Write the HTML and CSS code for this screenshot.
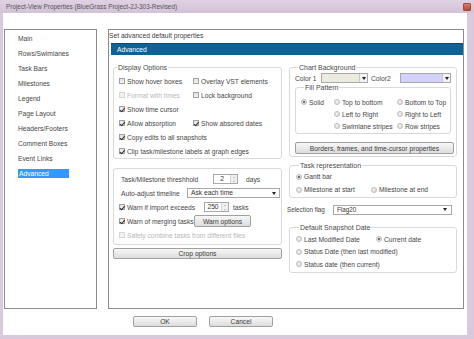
FILE: index.html
```html
<!DOCTYPE html>
<html lang="en">
<head>
  <meta charset="UTF-8" />
  <title>Project-View Properties</title>
  <link rel="stylesheet" href="styles.css">
</head>
<body>

  <div class="window">
    <div class="titlebar">
      <span class="title">Project-View Properties (BlueGrass Project-2J-303-Revised)</span>
      <span class="close"></span>
    </div>

    <div class="client">
      <div class="body">
        <ul class="nav">
          <li>Main</li>
          <li>Rows/Swimlanes</li>
          <li>Task Bars</li>
          <li>Milestones</li>
          <li>Legend</li>
          <li>Page Layout</li>
          <li>Headers/Footers</li>
          <li>Comment Boxes</li>
          <li>Event Links</li>
          <li><span class="selected">Advanced</span></li>
        </ul>

        <div class="panel">
          <div class="panel-caption">Set advanced default properties</div>
          <div class="panel-header">Advanced</div>

          <div class="columns">
            <div class="col col-left">
              <fieldset class="group display-group">
                <legend>Display Options</legend>
                <div class="check-grid">
                  <label class="opt"><span class="cb"></span>Show hover boxes</label>
                  <label class="opt"><span class="cb"></span>Overlay VST elements</label>
                  <label class="opt disabled"><span class="cb"></span>Format with times</label>
                  <label class="opt"><span class="cb"></span>Lock background</label>
                  <label class="opt wide"><span class="cb on"></span>Show time cursor</label>
                  <label class="opt"><span class="cb on"></span>Allow absorption</label>
                  <label class="opt"><span class="cb on"></span>Show absored dates</label>
                  <label class="opt wide"><span class="cb on"></span>Copy edits to all snapshots</label>
                  <label class="opt wide"><span class="cb on"></span>Clip task/milestone labels at graph edges</label>
                </div>
              </fieldset>

              <fieldset class="group threshold-group">
                <div class="row">
                  <span class="row-label threshold-label">Task/Milestone threshhold</span>
                  <span class="spin spin-days"><span class="spin-value">2</span><span class="spin-arrows"><i></i><i></i></span></span>
                  <span class="unit">days</span>
                </div>
                <div class="row">
                  <span class="row-label adjust-label">Auto-adjust timeline</span>
                  <span class="select adjust-select"><span class="select-text">Ask each time</span><span class="arrow"></span></span>
                </div>
                <div class="row row-check">
                  <label class="opt import-opt"><span class="cb on"></span>Warn if import exceeds</label>
                  <span class="spin spin-tasks"><span class="spin-value">250</span><span class="spin-arrows"><i></i><i></i></span></span>
                  <span class="unit unit-tasks">tasks</span>
                </div>
                <div class="row row-check">
                  <label class="opt merge-opt"><span class="cb on"></span>Warn of merging tasks</label>
                  <button class="btn warn-btn" type="button">Warn options</button>
                </div>
                <div class="row row-check">
                  <label class="opt disabled"><span class="cb"></span>Safely combine tasks from different files</label>
                </div>
              </fieldset>

              <button class="btn crop-btn" type="button">Crop options</button>
            </div>

            <div class="col col-right">
              <fieldset class="group chart-group">
                <legend>Chart Background</legend>
                <div class="color-row">
                  <span class="color-label">Color 1</span>
                  <span class="select color-select color-one"><span class="select-text"></span><span class="arrow"></span></span>
                  <span class="color-label color-label-two">Color2</span>
                  <span class="select color-select color-two"><span class="select-text"></span><span class="arrow"></span></span>
                </div>

                <fieldset class="group fill-group">
                  <legend>Fill Pattern</legend>
                  <div class="radio-grid">
                    <label class="opt"><span class="rb on"></span>Solid</label>
                    <label class="opt"><span class="rb"></span>Top to bottom</label>
                    <label class="opt"><span class="rb"></span>Bottom to Top</label>
                    <span></span>
                    <label class="opt"><span class="rb"></span>Left to Right</label>
                    <label class="opt"><span class="rb"></span>Right to Left</label>
                    <span></span>
                    <label class="opt"><span class="rb"></span>Swimlane stripes</label>
                    <label class="opt"><span class="rb"></span>Row stripes</label>
                  </div>
                </fieldset>

                <button class="btn borders-btn" type="button">Borders, frames, and time-cursor properties</button>
              </fieldset>

              <fieldset class="group task-group">
                <legend>Task representation</legend>
                <div class="radio-row">
                  <label class="opt"><span class="rb on"></span>Gantt bar</label>
                </div>
                <div class="radio-row">
                  <label class="opt start-opt"><span class="rb"></span>Milestone at start</label>
                  <label class="opt"><span class="rb"></span>Milestone at end</label>
                </div>
              </fieldset>

              <div class="flag-row">
                <span class="flag-label">Selection flag</span>
                <span class="select flag-select"><span class="select-text">Flag20</span><span class="arrow"></span></span>
              </div>

              <fieldset class="group snapshot-group">
                <legend>Default Snapshot Date</legend>
                <div class="snap-row">
                  <label class="opt modified-opt"><span class="rb"></span>Last Modified Date</label>
                  <label class="opt"><span class="rb on"></span>Current date</label>
                </div>
                <div class="snap-row">
                  <label class="opt"><span class="rb"></span>Status Date (then last modified)</label>
                </div>
                <div class="snap-row">
                  <label class="opt"><span class="rb"></span>Status date (then current)</label>
                </div>
              </fieldset>
            </div>
          </div>
        </div>
      </div>

      <div class="footer">
        <button class="btn footer-btn" type="button">OK</button>
        <button class="btn footer-btn" type="button">Cancel</button>
      </div>
    </div>
  </div>

</body>
</html>
```

FILE: styles.css
```css
* {
  box-sizing: border-box;
}

body {
  margin: 0;
  font-family: 'Liberation Sans', Arial, sans-serif;
  font-size: 6.7px;
  color: #464646;
  background: #d9c9dd;
}

.window {
  width: 474px;
  height: 339px;
  background: #d9c9dd;
  display: flex;
  flex-direction: column;
}

.titlebar {
  height: 13px;
  display: flex;
  align-items: center;
  justify-content: space-between;
  padding: 0 3px 0 6px;
  background: linear-gradient(#dfd2e2, #d4c2d8);
}

.title {
  font-size: 6.4px;
  color: #555;
}

.close {
  width: 8px;
  height: 8px;
  margin-top: 1px;
  background: linear-gradient(#d98066, #b8492e);
  border: 1px solid #9a4a38;
  border-radius: 1px;
}

.client {
  margin: 0 7px 0 3px;
  height: 322px;
  background: #fff;
  padding-top: 16px;
  display: flex;
  flex-direction: column;
}

.body {
  display: flex;
  height: 280px;
  padding-left: 1px;
}

/* left navigation list */
.nav {
  list-style: none;
  margin: 0 11px 0 0;
  padding: 1px 0 0 13px;
  width: 93px;
  border: 1px solid #8c8c8c;
}

.nav li {
  height: 15px;
  line-height: 15px;
}

.nav .selected {
  background: #3399ff;
  color: #fff;
  width: 51px;
  padding-left: 1px;
  line-height: 9px;
  display: inline-block;
}

/* right panel */
.panel {
  width: 356px;
  border: 1px solid #8c8c8c;
}

.panel-caption {
  height: 13px;
  line-height: 12px;
  color: #3c3c3c;
}

.panel-header {
  height: 12px;
  line-height: 12px;
  margin-left: 2px;
  padding-left: 6px;
  background: #0e6396;
  border-top: 1px solid #0a4c74;
  color: #fff;
}

.columns {
  display: flex;
  gap: 7px;
  padding: 8px 0 0 4px;
}

.col-left {
  width: 169px;
}

.col-right {
  width: 168px;
}

/* group boxes */
.group {
  margin: 0;
  padding: 0;
  min-width: 0;
  border: 1px solid #d9d9d9;
  border-radius: 3px;
}

.group legend {
  padding: 0 1px;
  margin-left: 3px;
  line-height: 9px;
  font-size: 7px;
  color: #4a4a4a;
}

.opt {
  display: flex;
  align-items: center;
  white-space: nowrap;
}

.opt.disabled {
  color: #b8b8b8;
}

/* checkboxes and radios */
.cb {
  display: inline-block;
  width: 6px;
  height: 6px;
  margin-right: 2px;
  border: 1px solid #a2a2a2;
  background: linear-gradient(#e2e2e2, #f4f4f4);
  flex: none;
}

.disabled .cb {
  border-color: #d6d6d6;
  background: #f2f2f2;
}

.cb.on::after {
  content: "";
  display: block;
  width: 2px;
  height: 3.5px;
  margin: -0.5px 0 0 1.2px;
  border: solid #2a2a2a;
  border-width: 0 1.1px 1.1px 0;
  transform: rotate(40deg);
}

.rb {
  display: inline-block;
  width: 6px;
  height: 6px;
  margin-right: 2px;
  border: 1px solid #bcbcbc;
  border-radius: 50%;
  background: radial-gradient(circle at 40% 40%, #f4f4f4, #d6d6d6);
  flex: none;
}

.rb.on::after {
  content: "";
  display: block;
  width: 2px;
  height: 2px;
  margin: 1px;
  border-radius: 50%;
  background: #444;
}

/* display options */
.check-grid {
  display: grid;
  grid-template-columns: 74px auto;
  grid-auto-rows: 14px;
  padding: 2px 0 0 5px;
}

.check-grid .wide {
  grid-column: span 2;
}

/* threshold box */
.threshold-group {
  margin-top: 9px;
  padding: 3px 0 2px 0;
}

.row {
  display: flex;
  align-items: center;
  height: 14px;
  padding-left: 7px;
}

.row-check {
  padding-left: 5px;
}

.threshold-label {
  width: 92px;
}

.adjust-label {
  width: 66px;
}

.import-opt {
  width: 85px;
}

.merge-opt {
  width: 75px;
}

.unit {
  margin-left: 8px;
}

.unit-tasks {
  margin-left: 4px;
}

.spin {
  display: flex;
  width: 25px;
  height: 10px;
  border: 1px solid #a8a8a8;
  background: #fff;
}

.spin-value {
  flex: 1;
  text-align: center;
  line-height: 8px;
  color: #333;
}

.spin-arrows {
  width: 7px;
  display: flex;
  flex-direction: column;
  border-left: 1px solid #d6d6d6;
  background: #efefef;
}

.spin-arrows i {
  flex: 1;
  display: flex;
  align-items: center;
  justify-content: center;
}

.spin-arrows i::after {
  content: "";
  border-left: 1.5px solid transparent;
  border-right: 1.5px solid transparent;
  border-bottom: 1.5px solid #8aa0b4;
}

.spin-arrows i + i::after {
  border-bottom: 0;
  border-top: 1.5px solid #8aa0b4;
}

.select {
  display: flex;
  align-items: center;
  height: 10px;
  border: 1px solid #a8a8a8;
  background: #fff;
}

.select-text {
  flex: 1;
  padding-left: 3px;
  line-height: 8px;
  color: #333;
}

.arrow {
  width: 10px;
  display: flex;
  justify-content: center;
}

.arrow::after {
  content: "";
  border-left: 2px solid transparent;
  border-right: 2px solid transparent;
  border-top: 3px solid #222;
}

.adjust-select {
  width: 93px;
}

.adjust-select .arrow {
  width: 11px;
}

/* buttons */
.btn {
  font-family: 'Liberation Sans', Arial, sans-serif;
  font-size: 6.7px;
  color: #3a3a3a;
  padding: 0;
  border: 1px solid #a0a0a0;
  border-radius: 2px;
  background: linear-gradient(#f7f7f7, #dddddd);
}

.warn-btn {
  width: 57px;
  height: 12px;
}

.crop-btn {
  display: block;
  width: 169px;
  height: 11px;
  margin-top: 3px;
}

/* chart background */
.chart-group {
  padding: 0 0 2px 5px;
}

.color-row {
  display: flex;
  align-items: center;
  height: 11px;
  padding-top: 1px;
}

.color-label {
  width: 26px;
}

.color-label-two {
  width: 29px;
  margin-left: 3px;
}

.color-select {
  height: 10px;
}

.color-one {
  width: 47px;
  background: #ecebdf;
}

.color-two {
  width: 51px;
  background: #d2d2fb;
}

.color-select .arrow {
  width: 8px;
  height: 8px;
  align-items: center;
  background: #f2f2f2;
  border-left: 1px solid #c8c8c8;
}

.fill-group {
  width: 156px;
  padding: 4px 0 1px 5px;
}

.fill-group legend {
  margin-left: 3px;
}

.radio-grid {
  display: grid;
  grid-template-columns: 33px 63px auto;
  grid-auto-rows: 12px;
}

.borders-btn {
  display: block;
  width: 159px;
  height: 12px;
  margin-top: 8px;
}

/* task representation */
.task-group {
  margin-top: 4px;
  padding: 0 0 1px 6px;
}

.radio-row {
  display: flex;
  align-items: center;
  height: 13px;
}

.start-opt {
  width: 75px;
}

.flag-row {
  display: flex;
  align-items: center;
  height: 11px;
  margin: 6px 0 0 -2px;
  font-size: 6.3px;
}

.flag-label {
  width: 46px;
}

.flag-select {
  width: 119px;
}

.flag-select .arrow {
  width: 12px;
}

/* snapshot date */
.snapshot-group {
  margin-top: 8px;
  padding: 1px 0 1px 6px;
}

.snap-row {
  display: flex;
  align-items: center;
  height: 12.5px;
}

.modified-opt {
  width: 80px;
}

/* dialog buttons */
.footer {
  display: flex;
  gap: 12px;
  padding: 7px 0 0 130px;
}

.footer-btn {
  width: 64px;
  height: 11px;
}
```
